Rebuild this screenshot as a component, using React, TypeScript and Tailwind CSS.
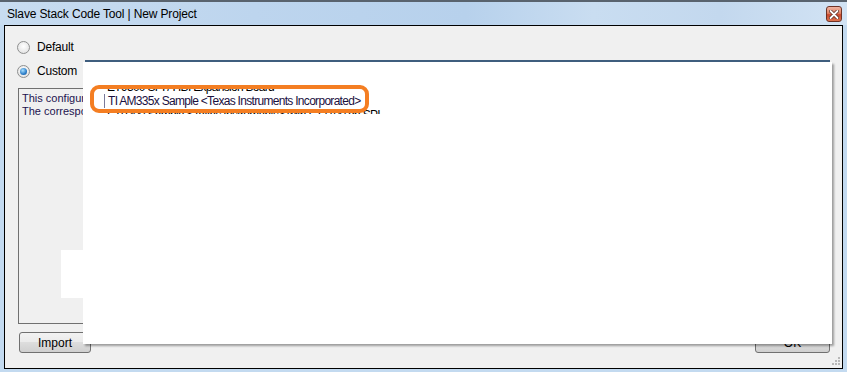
import React from 'react';

const Radio: React.FC<{ checked?: boolean; label: string }> = ({ checked, label }) => (
  <div className="flex items-center h-[13px] gap-[7px]">
    <div className="w-[13px] h-[13px] rounded-full border border-[#8e8f8f] bg-[radial-gradient(circle_at_50%_40%,#ffffff,#dcdcdc)] flex items-center justify-center">
      {checked && (
        <div className="w-[7px] h-[7px] rounded-full bg-[radial-gradient(circle_at_40%_35%,#a8e0ff,#2a7cc8_60%,#124f8e)]" />
      )}
    </div>
    <span className="text-[12px] leading-[13px] text-black tracking-[-0.2px]">{label}</span>
  </div>
);

export default function App() {
  return (
    <div
      className="relative w-[847px] h-[372px] overflow-hidden bg-[#c3daf0] flex flex-col"
      style={{ fontFamily: '"Liberation Sans", Arial, sans-serif' }}
    >
      {/* top strip */}
      <div className="h-[2px] bg-[#59636e]" />

      {/* title bar */}
      <div className="h-[23px] flex items-center justify-between pl-[7px] pr-[5px] bg-[linear-gradient(90deg,#c8dcf0_0%,#bdd5ee_30%,#b7d1ec_55%,#c9ddf1_70%,#c3d8ee_85%,#d2e3f4_100%)]">
        <span className="text-[12px] text-black leading-none tracking-[-0.15px]">Slave Stack Code Tool | New Project</span>
        <div className="w-[16px] h-[16px] mt-[1px] rounded-[3px] border border-[#6f3326] bg-[linear-gradient(180deg,#f0b4a2_0%,#e08466_45%,#c8472c_55%,#dc7450_100%)] flex items-center justify-center">
          <svg width="10" height="9" viewBox="0 0 10 9">
            <path d="M1.5 1 L8.5 8 M8.5 1 L1.5 8" stroke="#5a2a22" strokeWidth="3.4" strokeLinecap="round" />
            <path d="M1.5 1 L8.5 8 M8.5 1 L1.5 8" stroke="#ffffff" strokeWidth="1.8" strokeLinecap="round" />
          </svg>
        </div>
      </div>

      {/* client area */}
      <div className="relative mx-[4px] h-[344px] border border-black bg-[#f0f0f0] flex flex-col pl-[12px]">
        <div className="mt-[15px]">
          <Radio label="Default" />
        </div>
        <div className="mt-[11px]">
          <Radio checked label="Custom" />
        </div>
        <div className="mt-[10px] ml-[1px] w-[420px] h-[236px] border border-[#707070] bg-[#f0f0f0] pl-[3px] pt-[3px] text-[11px] leading-[13px] text-[#22134f] overflow-hidden">
          <div className="whitespace-nowrap">This configuration is based on the TI AM335x sample.</div>
          <div className="whitespace-nowrap">The corresponding source files are added to the project.</div>
        </div>
        <div className="mt-[8px] flex items-start">
          <button className="ml-[2px] w-[72px] h-[21px] rounded-[3px] border border-[#707070] bg-[linear-gradient(180deg,#f2f2f2_0%,#ebebeb_45%,#dddddd_50%,#cfcfcf_100%)] text-[12px] text-black">
            Import
          </button>
          <button className="ml-[664px] w-[75px] h-[21px] rounded-[3px] border border-[#707070] bg-[linear-gradient(180deg,#f2f2f2_0%,#ebebeb_45%,#dddddd_50%,#cfcfcf_100%)] text-[12px] text-black">
            OK
          </button>
        </div>
        {/* resize grip */}
        <svg className="absolute right-[1px] bottom-[2px]" width="9" height="9" viewBox="0 0 9 9">
          <rect x="6" y="0" width="2" height="2" fill="#b8b8b8" />
          <rect x="3" y="3" width="2" height="2" fill="#b8b8b8" />
          <rect x="6" y="3" width="2" height="2" fill="#b8b8b8" />
          <rect x="0" y="6" width="2" height="2" fill="#b8b8b8" />
          <rect x="3" y="6" width="2" height="2" fill="#b8b8b8" />
          <rect x="6" y="6" width="2" height="2" fill="#b8b8b8" />
        </svg>
      </div>
      <div className="flex-1" />

      {/* stray white patch from redraw */}
      <div className="absolute left-[61px] top-[250px] w-[22px] h-[48px] bg-white" />

      {/* combo line */}
      <div className="absolute left-[85px] top-[60px] w-[745px] h-[2px] bg-[#3f5e7e]" />

      {/* dropdown popup */}
      <div className="absolute left-[83px] top-[62px] w-[749px] h-[282px] bg-white shadow-[2px_2px_2px_rgba(0,0,0,0.35)]" />

      {/* visible list fragment */}
      <div className="absolute left-[104px] top-[88px] w-[300px] h-[26px] overflow-hidden">
        <div className="mt-[-8px] text-[12px] leading-[14px] text-black whitespace-nowrap tracking-[-0.7px]">
          <div className="pl-[3px]">ET9300 SPI / HBI Expansion Board</div>
          <div className="pl-[3px] border-l border-[#7a7a9a] text-[#1a1040]">TI AM335x Sample &lt;Texas Instruments Incorporated&gt;</div>
          <div className="pl-[3px]">ET9300 Sample &lt;Texas Instruments&gt; with ET1100 on SPI</div>
        </div>
      </div>

      {/* orange annotation */}
      <div className="absolute left-[90px] top-[85px] w-[279px] h-[28px] rounded-[9px] border-[4px] border-[#f47e22]" />
    </div>
  );
}
